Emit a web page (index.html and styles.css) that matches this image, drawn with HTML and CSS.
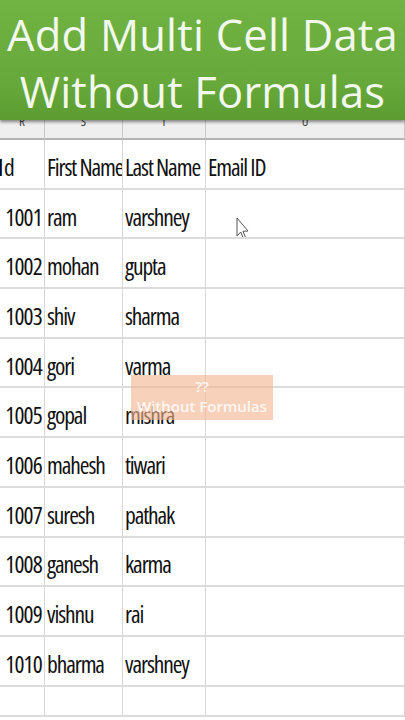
FILE: index.html
```html
<!DOCTYPE html>
<html>
<head>
<meta charset="utf-8">
<link rel="stylesheet" href="styles.css">
</head>
<body>
<div class="page">
  <header class="banner">
    <div class="line">Add Multi Cell Data</div>
    <div class="line">Without Formulas</div>
  </header>
  <div class="sheet">
    <div class="colhead"><span>R</span></div>
    <div class="colhead"><span>S</span></div>
    <div class="colhead"><span>T</span></div>
    <div class="colhead"><span>U</span></div>

    <div class="cell id"><b>I</b>d</div><div class="cell">First Name</div><div class="cell">Last Name</div><div class="cell">Email ID</div>
    <div class="cell num">1001</div><div class="cell">ram</div><div class="cell">varshney</div><div class="cell cursor-cell"><svg class="cursor" width="13" height="26" viewBox="0 0 13 26"><path d="M1 1 L1 19 L4.8 15 L8 23.5 L10.3 22.5 L7 14.3 L12 14 Z" fill="#fff" stroke="#555" stroke-width="1"/></svg></div>
    <div class="cell num">1002</div><div class="cell">mohan</div><div class="cell">gupta</div><div class="cell"></div>
    <div class="cell num">1003</div><div class="cell">shiv</div><div class="cell">sharma</div><div class="cell"></div>
    <div class="cell num">1004</div><div class="cell">gori</div><div class="cell">varma</div><div class="cell"></div>
    <div class="cell num">1005</div><div class="cell">gopal</div><div class="cell">mishra</div><div class="cell"></div>
    <div class="cell num">1006</div><div class="cell">mahesh</div><div class="cell">tiwari</div><div class="cell"></div>
    <div class="cell num">1007</div><div class="cell">suresh</div><div class="cell">pathak</div><div class="cell"></div>
    <div class="cell num">1008</div><div class="cell">ganesh</div><div class="cell">karma</div><div class="cell"></div>
    <div class="cell num">1009</div><div class="cell">vishnu</div><div class="cell">rai</div><div class="cell"></div>
    <div class="cell num">1010</div><div class="cell">bharma</div><div class="cell">varshney</div><div class="cell"></div>
    <div class="cell short"></div><div class="cell short"></div><div class="cell short"></div><div class="cell short"></div>
  </div>
  <div class="watermark">
    <div>??</div>
    <div>Without Formulas</div>
  </div>
</div>
</body>
</html>
```
FILE: styles.css
```css
html, body {
  margin: 0;
  padding: 0;
  background: #ffffff;
}
.page {
  position: relative;
  width: 405px;
  height: 720px;
  overflow: hidden;
  background: #ffffff;
}
.banner {
  position: relative;
  z-index: 2;
  height: 120px;
  background: linear-gradient(#72b443, #66a83a 70%, #5c9c31);
  box-shadow: 0 2px 3px rgba(0,0,0,0.45);
  color: #f3f8ee;
  font-family: "Open Sans", sans-serif;
  font-stretch: 90%;
  font-size: 43.5px;
  line-height: 57px;
  text-align: center;
  padding-top: 6px;
  box-sizing: border-box;
  letter-spacing: 0.2px;
}
.banner .line {
  white-space: nowrap;
}
.sheet {
  display: grid;
  grid-template-columns: 45px 78px 83px 199px;
  grid-template-rows: 20px repeat(11, 49.7px) 30px;
  font-family: "Open Sans", sans-serif;
  font-stretch: 75%;
  color: #111;
}
.colhead {
  background: #efefef;
  border-right: 1px solid #c8c8c8;
  border-bottom: 2px solid #b4b4b4;
  overflow: hidden;
  text-align: center;
  font-size: 13px;
  color: #444;
  line-height: 10px;
}
.colhead span {
  display: block;
  margin-top: -4px;
}
.cell {
  border-right: 1px solid #d6d6d6;
  border-bottom: 2px solid #dcdcdc;
  font-size: 23.5px;
  display: flex;
  align-items: center;
  padding-left: 2px;
  padding-top: 6px;
  white-space: nowrap;
  overflow: hidden;
  letter-spacing: -1.1px;
}
.cell.num {
  justify-content: flex-end;
  padding-right: 2px;
  padding-left: 0;
  letter-spacing: -0.8px;
}
.cell.id {
  padding-left: 0;
}
.cell.id b {
  display: inline-block;
  width: 4px;
  overflow: hidden;
  color: #000;
  font-weight: bold;
  text-indent: -3px;
}
.cursor-cell {
  position: relative;
}
.cursor {
  position: absolute;
  left: 30px;
  top: 27px;
}
.watermark {
  position: absolute;
  left: 131px;
  top: 375px;
  width: 142px;
  height: 45px;
  background: rgba(244, 180, 146, 0.62);
  color: rgba(255, 255, 255, 0.85);
  font-family: "Open Sans", sans-serif;
  font-weight: 600;
  font-size: 15px;
  line-height: 20px;
  text-align: center;
  padding-top: 1px;
  box-sizing: border-box;
  white-space: nowrap;
}
```
